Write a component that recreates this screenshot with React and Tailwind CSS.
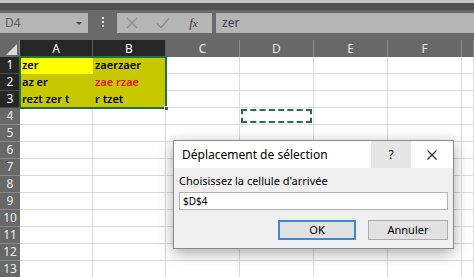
import React from "react";

const COLS = [
  { key: "A", w: "w-[73px]" },
  { key: "B", w: "w-[73px]" },
  { key: "C", w: "w-[74px]" },
  { key: "D", w: "w-[74px]" },
  { key: "E", w: "w-[74px]" },
  { key: "F", w: "w-[74px]" },
  { key: "G", w: "flex-1" },
];

// contents of the coloured block A1:B3
const DATA = {
  "A1": { text: "zer", bg: "bg-[#ffff00]" },
  "B1": { text: "zaerzaer", bg: "bg-[#c8c800]" },
  "A2": { text: "az er", bg: "bg-[#c8c800]" },
  "B2": { text: "zae rzae", bg: "bg-[#c8c800]", red: true },
  "A3": { text: "rezt zer t", bg: "bg-[#c8c800]" },
  "B3": { text: "r tzet", bg: "bg-[#c8c800]" },
};

const ROWS = Array.from({ length: 13 }, (_, i) => i + 1);

const FormulaBar = () => (
  <div className="flex h-[30px] items-start bg-[#6a6a6a] pt-[3px]">
    {/* name box */}
    <div className="flex h-[20px] w-[88px] items-center justify-between bg-[#b5b5b5] pl-[5px] pr-[6px]">
      <span className="text-[12px] text-[#5e5e5e]">D4</span>
      <span className="h-0 w-0 border-x-[3px] border-t-[3px] border-x-transparent border-t-[#4a4a4a]" />
    </div>

    {/* grip dots */}
    <div className="flex w-[29px] flex-col items-center gap-[2px] pt-[4px]">
      <span className="h-[2px] w-[2px] bg-[#e8e8e8]" />
      <span className="h-[2px] w-[2px] bg-[#e8e8e8]" />
      <span className="h-[2px] w-[2px] bg-[#e8e8e8]" />
    </div>

    {/* cancel / enter / fx */}
    <div className="flex h-[20px] w-[95px] items-center bg-[#b5b5b5]">
      <svg width="30" height="20" viewBox="0 0 30 20" className="shrink-0">
        <path d="M10 5 L20 15 M20 5 L10 15" stroke="#8d8d8d" strokeWidth="1.3" fill="none" />
      </svg>
      <svg width="32" height="20" viewBox="0 0 32 20" className="shrink-0">
        <path d="M10 10.5 L14 14.5 L22 5.5" stroke="#8d8d8d" strokeWidth="1.4" fill="none" />
      </svg>
      <span className="flex-1 pr-[4px] text-center text-[13px] italic text-[#3c3c3c]" style={{ fontFamily: '"Liberation Serif", serif' }}>
        f<span className="text-[11px]">x</span>
      </span>
    </div>

    <div className="ml-[4px] flex h-[20px] flex-1 items-center bg-[#b5b5b5] pl-[6px]">
      <span className="text-[12px] text-[#3f3f3f]">zer</span>
    </div>
  </div>
);

const HeaderRow = () => (
  <div className="flex h-[17px] bg-[#686868]">
    <div className="relative w-[20px] border-r border-[#8a8a8a]">
      <span className="absolute bottom-[2px] right-[2px] h-0 w-0 border-b-[11px] border-l-[11px] border-b-[#d8d8d8] border-l-transparent" />
    </div>
    {COLS.map((c) => {
      const sel = c.key === "A" || c.key === "B";
      return (
        <div
          key={c.key}
          className={`${c.w} flex items-center justify-center border-r text-[12px] ${
            sel
              ? "border-[#5a5a5a] bg-[#262626] text-white"
              : "border-[#8e8e8e] text-[#ececec]"
          }`}
        >
          {c.key === "G" ? "" : c.key}
        </div>
      );
    })}
  </div>
);

const SheetRow = ({ n }) => {
  const selRow = n <= 3;
  return (
    <div className="flex h-[17px]">
      <div
        className={`flex w-[20px] items-center justify-center border-b text-[12px] ${
          selRow
            ? "border-[#4a4a4a] bg-[#262626] text-white"
            : "border-[#878787] bg-[#686868] text-[#ececec]"
        }`}
      >
        {n}
      </div>
      {COLS.map((c) => {
        const cell = DATA[c.key + n];
        const isD4 = c.key === "D" && n === 4;
        return (
          <div
            key={c.key}
            className={`${c.w} relative flex items-center overflow-hidden whitespace-nowrap border-b border-r pl-[2px] text-[11px] font-semibold ${
              cell ? `${cell.bg} border-transparent` : "border-[#dcdcdc] bg-white"
            } ${cell && cell.red ? "text-[#e5160a]" : "text-black"}`}
          >
            {cell ? cell.text : ""}
            {isD4 && (
              <span className="absolute inset-[1px] border-2 border-dashed border-[#217346]" />
            )}
          </div>
        );
      })}
    </div>
  );
};

const Dialog = () => (
  <div className="absolute left-[173px] top-[140px] w-[281px] border border-[#8c8c8c] bg-[#f0f0f0] shadow-[0_4px_14px_rgba(0,0,0,0.35)]">
    <div className="flex h-[27px] items-center bg-white">
      <span className="flex-1 pl-[8px] text-[12px] text-black">Déplacement de sélection</span>
      <span className="flex h-[27px] w-[40px] items-center justify-center bg-[#e6e6e6] text-[12px] text-black">?</span>
      <span className="flex h-[27px] w-[42px] items-center justify-center">
        <svg width="12" height="12" viewBox="0 0 12 12">
          <path d="M1.5 1.5 L10.5 10.5 M10.5 1.5 L1.5 10.5" stroke="#222" strokeWidth="1.1" fill="none" />
        </svg>
      </span>
    </div>

    <div className="px-[5px] pb-[8px] pt-[6px]">
      <div className="text-[11px] leading-[14px] text-black">Choisissez la cellule d'arrivée</div>
      <div className="mt-[4px] flex h-[18px] items-center border border-[#b4b4b4] bg-white pl-[3px] text-[10px] text-black">
        $D$4
      </div>
      <div className="mt-[10px] flex justify-end gap-[12px]">
        <button className="h-[20px] w-[78px] border-2 border-[#3c8ad8] bg-[#e1e1e1] text-[11px] text-black">OK</button>
        <button className="h-[20px] w-[80px] border border-[#adadad] bg-[#e1e1e1] text-[11px] text-black">Annuler</button>
      </div>
    </div>
  </div>
);

const App = () => {
  return (
    <div
      className="relative h-[277px] w-[474px] overflow-hidden bg-white"
      style={{ fontFamily: '"Noto Sans", "Open Sans", sans-serif' }}
    >
      <div className="h-[3px] bg-[#c4c4c4]" />
      <div className="h-[7px] bg-[#505050]" />
      <FormulaBar />
      <HeaderRow />

      <div className="relative">
        {ROWS.map((n) => (
          <SheetRow key={n} n={n} />
        ))}

        {/* selection outline around A1:B3 */}
        <div className="absolute left-[19px] top-[-1px] h-[53px] w-[148px] border-2 border-[#217346]">
          <span className="absolute bottom-[-4px] right-[-4px] h-[5px] w-[5px] border border-white bg-[#217346]" />
        </div>
      </div>

      <Dialog />
    </div>
  );
};

export default App;
